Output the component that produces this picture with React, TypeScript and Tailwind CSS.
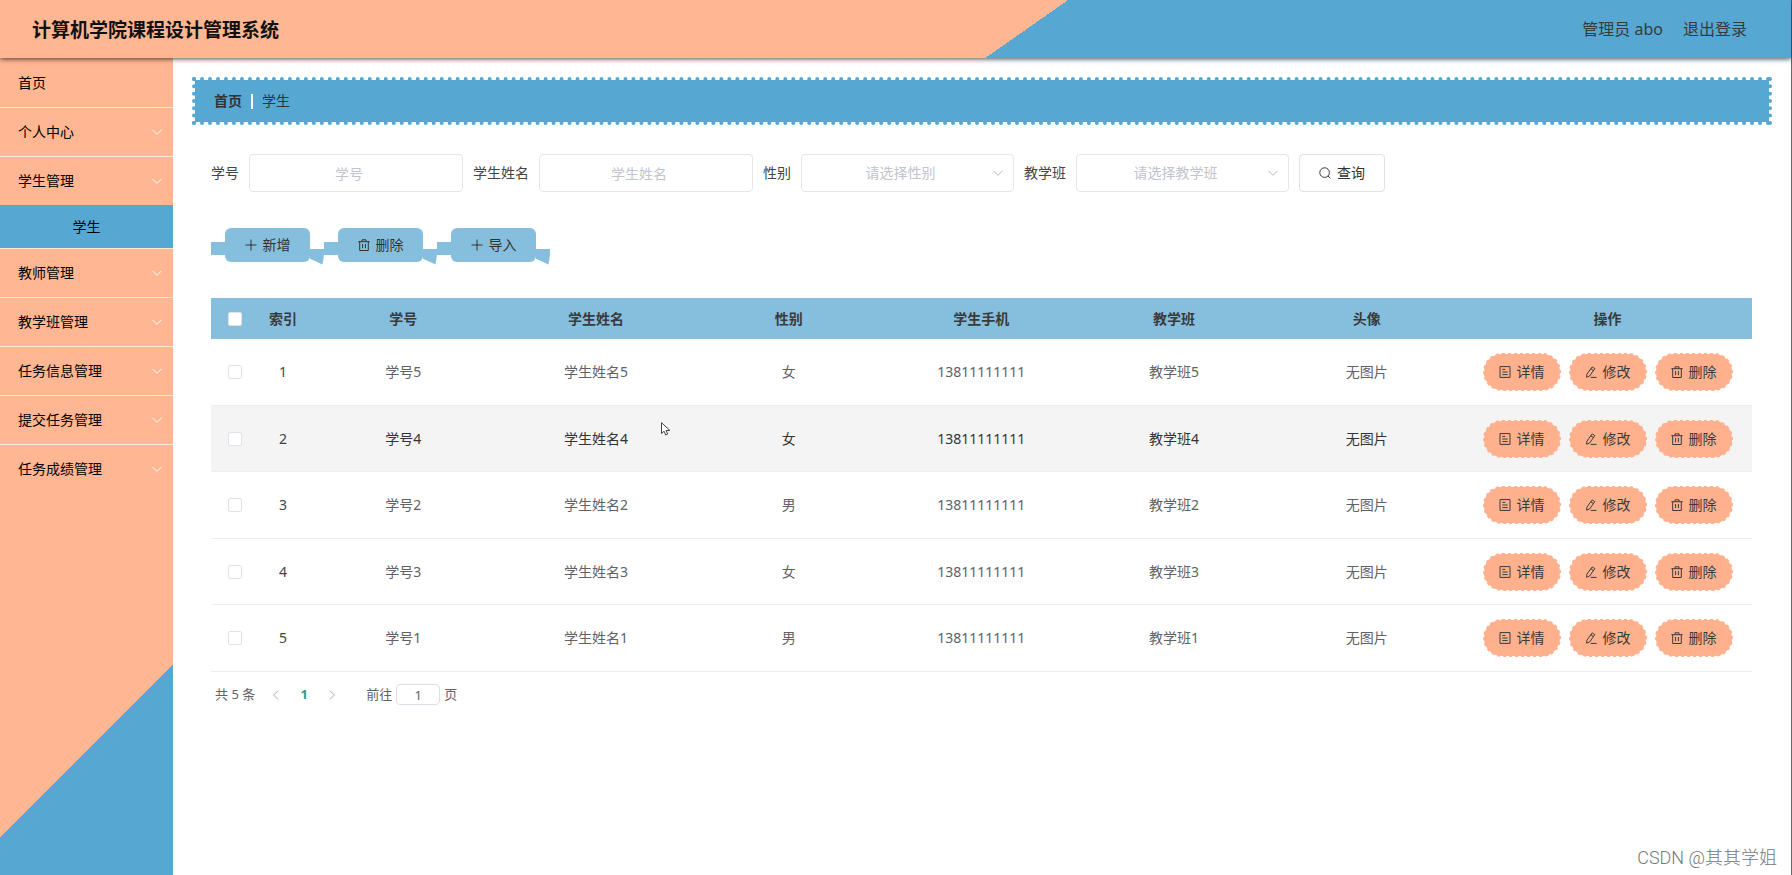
import type { ReactNode } from "react";

const menu = [
  { label: "首页", children: [], leaf: true },
  { label: "个人中心", children: [] },
  { label: "学生管理", children: ["学生"] },
  { label: "教师管理", children: [] },
  { label: "教学班管理", children: [] },
  { label: "任务信息管理", children: [] },
  { label: "提交任务管理", children: [] },
  { label: "任务成绩管理", children: [] },
];

const students = [
  { no: "学号5", name: "学生姓名5", sex: "女", phone: "13811111111", team: "教学班5" },
  { no: "学号4", name: "学生姓名4", sex: "女", phone: "13811111111", team: "教学班4" },
  { no: "学号2", name: "学生姓名2", sex: "男", phone: "13811111111", team: "教学班2" },
  { no: "学号3", name: "学生姓名3", sex: "女", phone: "13811111111", team: "教学班3" },
  { no: "学号1", name: "学生姓名1", sex: "男", phone: "13811111111", team: "教学班1" },
];

const columns = ["学号", "学生姓名", "性别", "学生手机", "教学班", "头像"];

function Icon({ className = "size-3", children }: { className?: string; children: ReactNode }) {
  return (
    <svg
      viewBox="0 0 12 12"
      fill="none"
      stroke="currentColor"
      strokeWidth="1"
      aria-hidden="true"
      className={`shrink-0 ${className}`}
    >
      {children}
    </svg>
  );
}

function ChevronIcon({ className }: { className?: string }) {
  return (
    <Icon className={className}>
      <path d="M1.500 3.800 6 8.300l4.500-4.500" />
    </Icon>
  );
}

function PlusIcon() {
  return (
    <Icon>
      <path d="M6 .5v11M.5 6h11" />
    </Icon>
  );
}

function TrashIcon() {
  return (
    <Icon>
      <path d="M.3 2.700h11.400M1.700 2.700v8.800h8.600V2.700M4 2.700V.8h4v1.900M4.600 5v4.200M7.400 5v4.200" />
    </Icon>
  );
}

function DetailIcon() {
  return (
    <Icon>
      <path d="M1 .6h10v10.800H1zM3.300 3.400h3M3.300 6h5.400M3.300 8.600h5.400" />
    </Icon>
  );
}

function EditIcon() {
  return (
    <Icon>
      <path d="M7.200.9 9.800 2.600 4.600 10l-3 1.200.3-3zM5.800 2.800l2.600 1.800M5.600 11.400h6" />
    </Icon>
  );
}

function SearchIcon() {
  return (
    <Icon>
      <circle cx="5.600" cy="5.600" r="4.800" />
      <path d="m9 9 2.400 2.400" />
    </Icon>
  );
}

// Ribbon-shaped button: a flat tail on the left, a cut one on the right.
function RibbonButton({ icon, children }: { icon: ReactNode; children: ReactNode }) {
  return (
    <div className="flex">
      <span className="mt-[14px] h-[13px] w-[14px] bg-[#86bfdd]" />
      <button
        type="button"
        className="flex h-[34px] w-[85px] items-center justify-center gap-[6px] rounded-md bg-[#86bfdd] text-[#333]"
      >
        {icon}
        {children}
      </button>
      <svg viewBox="0 0 14 16" aria-hidden="true" className="mt-[21px] h-4 w-[14px] fill-[#86bfdd]">
        <path d="M0 0h14q.2 8-1.600 15.400L0 9.800z" />
      </svg>
    </div>
  );
}

function RowButton({ icon, children }: { icon: ReactNode; children: ReactNode }) {
  return (
    <button
      type="button"
      className="flex h-9 w-[76px] items-center justify-center gap-[6px] rounded-full bg-[#ffb18e] text-[#3a3a3a] outline-3 -outline-offset-2 outline-dotted outline-[#ffb18e]"
    >
      {icon}
      {children}
    </button>
  );
}

function TextFilter({ id, label }: { id: string; label: string }) {
  return (
    <>
      <label htmlFor={id}>{label}</label>
      <input
        id={id}
        placeholder={label}
        className="h-[38px] w-[214px] rounded border border-[#e4e6ea] pr-[14px] text-center outline-none placeholder:text-[#c0c4cc]"
      />
    </>
  );
}

function SelectFilter({ id, label }: { id: string; label: string }) {
  return (
    <>
      <label htmlFor={id}>{label}</label>
      <div className="relative">
        <select
          id={id}
          className="block h-[38px] w-[213px] appearance-none rounded border border-[#e4e6ea] bg-white pr-[14px] text-center text-[#c0c4cc] outline-none [text-align-last:center]"
        >
          <option>请选择{label}</option>
        </select>
        <ChevronIcon className="pointer-events-none absolute top-[13px] right-[10px] size-3 text-[#b4b8c0]" />
      </div>
    </>
  );
}

function Checkbox({ label }: { label: string }) {
  return (
    <input
      type="checkbox"
      aria-label={label}
      className="mx-auto block size-[14px] appearance-none rounded-xs border border-[#dfe2e8] bg-white"
    />
  );
}

function Header() {
  return (
    <header className="relative z-10 flex h-[58px] items-center justify-between bg-[linear-gradient(145deg,#ffb692_57%,#57a7d3_57%)] pr-11 pl-8 shadow-[0_1px_5px_rgba(0,0,0,0.7)]">
      <h1 className="pt-[3px] text-[19px] font-bold text-[#111]">计算机学院课程设计管理系统</h1>
      <div className="flex gap-5 text-base text-[#3a3a3a]">
        <span>管理员 abo</span>
        <a href="#logout">退出登录</a>
      </div>
    </header>
  );
}

function Sidebar() {
  return (
    <nav className="w-[173px] shrink-0 bg-[linear-gradient(135deg,#ffb692_calc(100%-149px),#57a7d3_calc(100%-149px))] pt-px text-black">
      <ul>
        {menu.map((item, i) => (
          <li key={item.label} className={i < menu.length - 1 ? "border-b border-[#ffe6da]" : ""}>
            <a href="#menu" className="flex h-12 items-center justify-between pr-[10px] pl-[18px]">
              {item.label}
              {!item.leaf && <ChevronIcon className="size-3 text-white" />}
            </a>
            {item.children.map((child) => (
              <a
                key={child}
                href="#student"
                className="flex h-[43px] items-center justify-center bg-[#57a7d3]"
              >
                {child}
              </a>
            ))}
          </li>
        ))}
      </ul>
    </nav>
  );
}

function StudentTable() {
  return (
    <table className="mt-[33px] w-full table-fixed border-separate border-spacing-0 text-center">
      <colgroup>
        <col className="w-12" />
        <col className="w-12" />
        {columns.map((c) => (
          <col key={c} />
        ))}
        <col className="w-[289px]" />
      </colgroup>
      <thead className="bg-[#86bfdd] text-[#3a3a3a]">
        <tr className="h-[41px]">
          <th>
            <Checkbox label="全选" />
          </th>
          <th>索引</th>
          {columns.map((c) => (
            <th key={c}>{c}</th>
          ))}
          <th>操作</th>
        </tr>
      </thead>
      <tbody>
        {students.map((s, i) => (
          <tr
            key={s.no}
            className={`h-[67px] even:h-[66px] *:border-b *:border-[#ebeef2] ${
              i === 1 ? "bg-[#f4f4f4] text-[#333]" : "text-[#606266]"
            }`}
          >
            <td>
              <Checkbox label={`选择${s.name}`} />
            </td>
            <td className="text-[#444]">{i + 1}</td>
            <td>{s.no}</td>
            <td>{s.name}</td>
            <td>{s.sex}</td>
            <td>{s.phone}</td>
            <td>{s.team}</td>
            <td>无图片</td>
            <td>
              <div className="flex justify-center gap-[10px]">
                <RowButton icon={<DetailIcon />}>详情</RowButton>
                <RowButton icon={<EditIcon />}>修改</RowButton>
                <RowButton icon={<TrashIcon />}>删除</RowButton>
              </div>
            </td>
          </tr>
        ))}
      </tbody>
    </table>
  );
}

function Pagination() {
  return (
    <div className="mt-3 flex items-center pl-1 text-[13px] text-[#606266]">
      <span>共 5 条</span>
      <button type="button" aria-label="上一页" className="ml-[15px] text-[#a8abb2]">
        <ChevronIcon className="size-3 rotate-90" />
      </button>
      <button type="button" className="w-11 font-bold text-[#18a68a]">
        1
      </button>
      <button type="button" aria-label="下一页" className="text-[#a8abb2]">
        <ChevronIcon className="size-3 -rotate-90" />
      </button>
      <label htmlFor="page" className="ml-7">
        前往
      </label>
      <input
        id="page"
        defaultValue="1"
        className="mx-1 h-[21px] w-11 rounded border border-[#dcdfe6] text-center outline-none"
      />
      <span>页</span>
    </div>
  );
}

export default function App() {
  return (
    <div className="relative flex min-h-screen flex-col border-r border-[#66666c] bg-white font-['Noto_Sans','Noto_Sans_CJK_SC',sans-serif] text-sm">
      <Header />
      <div className="flex grow">
        <Sidebar />
        <main className="min-w-0 grow px-[22px] pt-[22px]">
          <div className="flex h-[42px] items-center bg-[#57a7d3] pl-[19px] text-[#333] outline-4 -outline-offset-1 outline-dotted outline-[#57a7d3]">
            <a href="#home" className="font-bold">
              首页
            </a>
            <span className="mx-[9px] h-[15px] w-[2px] bg-white" />
            <span>学生</span>
          </div>

          <div className="pr-[17px] pl-4">
            <form className="mt-8 flex items-center gap-[10px] text-[#444]">
              <TextFilter id="no" label="学号" />
              <TextFilter id="name" label="学生姓名" />
              <SelectFilter id="sex" label="性别" />
              <SelectFilter id="team" label="教学班" />
              <button
                type="button"
                className="flex h-[38px] w-[86px] items-center justify-center gap-[6px] rounded border border-[#e0e2e6] text-[#333]"
              >
                <SearchIcon />
                查询
              </button>
            </form>

            <div className="mt-9 flex">
              <RibbonButton icon={<PlusIcon />}>新增</RibbonButton>
              <RibbonButton icon={<TrashIcon />}>删除</RibbonButton>
              <RibbonButton icon={<PlusIcon />}>导入</RibbonButton>
            </div>

            <StudentTable />
            <Pagination />
          </div>
        </main>
      </div>

      <svg
        viewBox="0 0 10 14"
        aria-hidden="true"
        className="pointer-events-none absolute top-[422px] left-[661px] h-[14px] w-[10px] fill-white stroke-[#444]"
      >
        <path d="M.5.700v10.800l2.600-2.300 1.600 3.800 2-.9-1.600-3.600h3.800z" />
      </svg>
      <div className="pointer-events-none absolute right-[14px] bottom-[3px] font-['Roboto','Noto_Sans_CJK_SC',sans-serif] text-lg font-light text-[#777]">
        CSDN @其其学姐
      </div>
    </div>
  );
}
